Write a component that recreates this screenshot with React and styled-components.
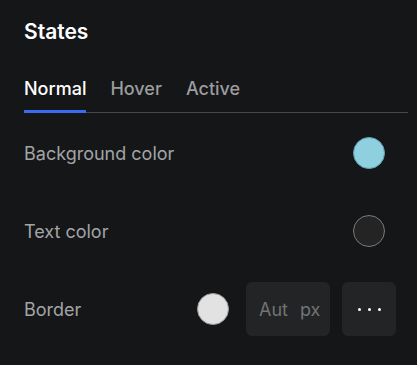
import React from "react";
import styled, { createGlobalStyle } from "styled-components";

const GlobalStyle = createGlobalStyle`
  html, body {
    margin: 0;
    padding: 0;
    background: #151618;
  }
  body {
    font-family: Inter, "Noto Sans", sans-serif;
    -webkit-font-smoothing: antialiased;
  }
`;

const Panel = styled.div`
  width: 417px;
  height: 365px;
  box-sizing: border-box;
  padding: 20px 9px 0 24px;
  background: #151618;
`;

const Title = styled.h2`
  margin: 0;
  font-size: 21px;
  line-height: 24px;
  font-weight: 600;
  color: #ffffff;
`;

const Tabs = styled.div`
  display: flex;
  gap: 24px;
  margin-top: 35px;
  border-bottom: 1px solid #47484b;
`;

const Tab = styled.button`
  position: relative;
  background: none;
  border: none;
  padding: 0 0 13px;
  font-family: inherit;
  font-size: 18px;
  line-height: 20px;
  font-weight: 500;
  color: ${(p) => (p.$active ? "#ffffff" : "#9b9c9e")};
  cursor: pointer;

  &::after {
    content: "";
    display: ${(p) => (p.$active ? "block" : "none")};
    position: absolute;
    left: 0;
    right: 0;
    bottom: -1px;
    height: 3px;
    background: #3a6cf1;
  }
`;

const Rows = styled.div`
  display: flex;
  flex-direction: column;
  gap: 24px;
  margin-top: 13px;
  padding-right: 12px;
`;

const Row = styled.div`
  display: flex;
  align-items: center;
  height: 54px;
`;

const Label = styled.span`
  flex: 1;
  font-size: 18px;
  color: #a3a4a6;
`;

const SwatchCell = styled.div`
  width: 54px;
  display: flex;
  justify-content: center;
`;

const Swatch = styled.div`
  width: 32px;
  height: 32px;
  box-sizing: border-box;
  border-radius: 50%;
  background: ${(p) => p.$color};
  border: 1px solid ${(p) => p.$ring};
`;

const Controls = styled.div`
  display: flex;
  align-items: center;
  gap: 12px;

  ${Swatch} {
    margin-right: 5px;
  }
`;

const InputBox = styled.div`
  width: 84px;
  height: 54px;
  box-sizing: border-box;
  padding-left: 13px;
  display: flex;
  align-items: center;
  gap: 12px;
  background: #232425;
  border-radius: 6px;
  font-size: 18px;
  color: #717377;
`;

const MoreButton = styled.button`
  width: 54px;
  height: 54px;
  border: none;
  border-radius: 6px;
  background: #232425;
  display: flex;
  align-items: center;
  justify-content: center;
  gap: 7px;
  padding: 0;
  cursor: pointer;
`;

const Dot = styled.span`
  width: 3px;
  height: 3px;
  border-radius: 50%;
  background: #ffffff;
`;

export default function App() {
  return (
    <>
      <GlobalStyle />
      <Panel>
        <Title>States</Title>
        <Tabs>
          <Tab $active>Normal</Tab>
          <Tab>Hover</Tab>
          <Tab>Active</Tab>
        </Tabs>
        <Rows>
          <Row>
            <Label>Background color</Label>
            <SwatchCell>
              <Swatch $color="#8fd0e0" $ring="#5f9fae" />
            </SwatchCell>
          </Row>
          <Row>
            <Label>Text color</Label>
            <SwatchCell>
              <Swatch $color="#242424" $ring="#7a7a7a" />
            </SwatchCell>
          </Row>
          <Row>
            <Label>Border</Label>
            <Controls>
              <Swatch $color="#e2e2e2" $ring="#9a9a9a" />
              <InputBox>
                <span>Aut</span>
                <span>px</span>
              </InputBox>
              <MoreButton>
                <Dot />
                <Dot />
                <Dot />
              </MoreButton>
            </Controls>
          </Row>
        </Rows>
      </Panel>
    </>
  );
}
